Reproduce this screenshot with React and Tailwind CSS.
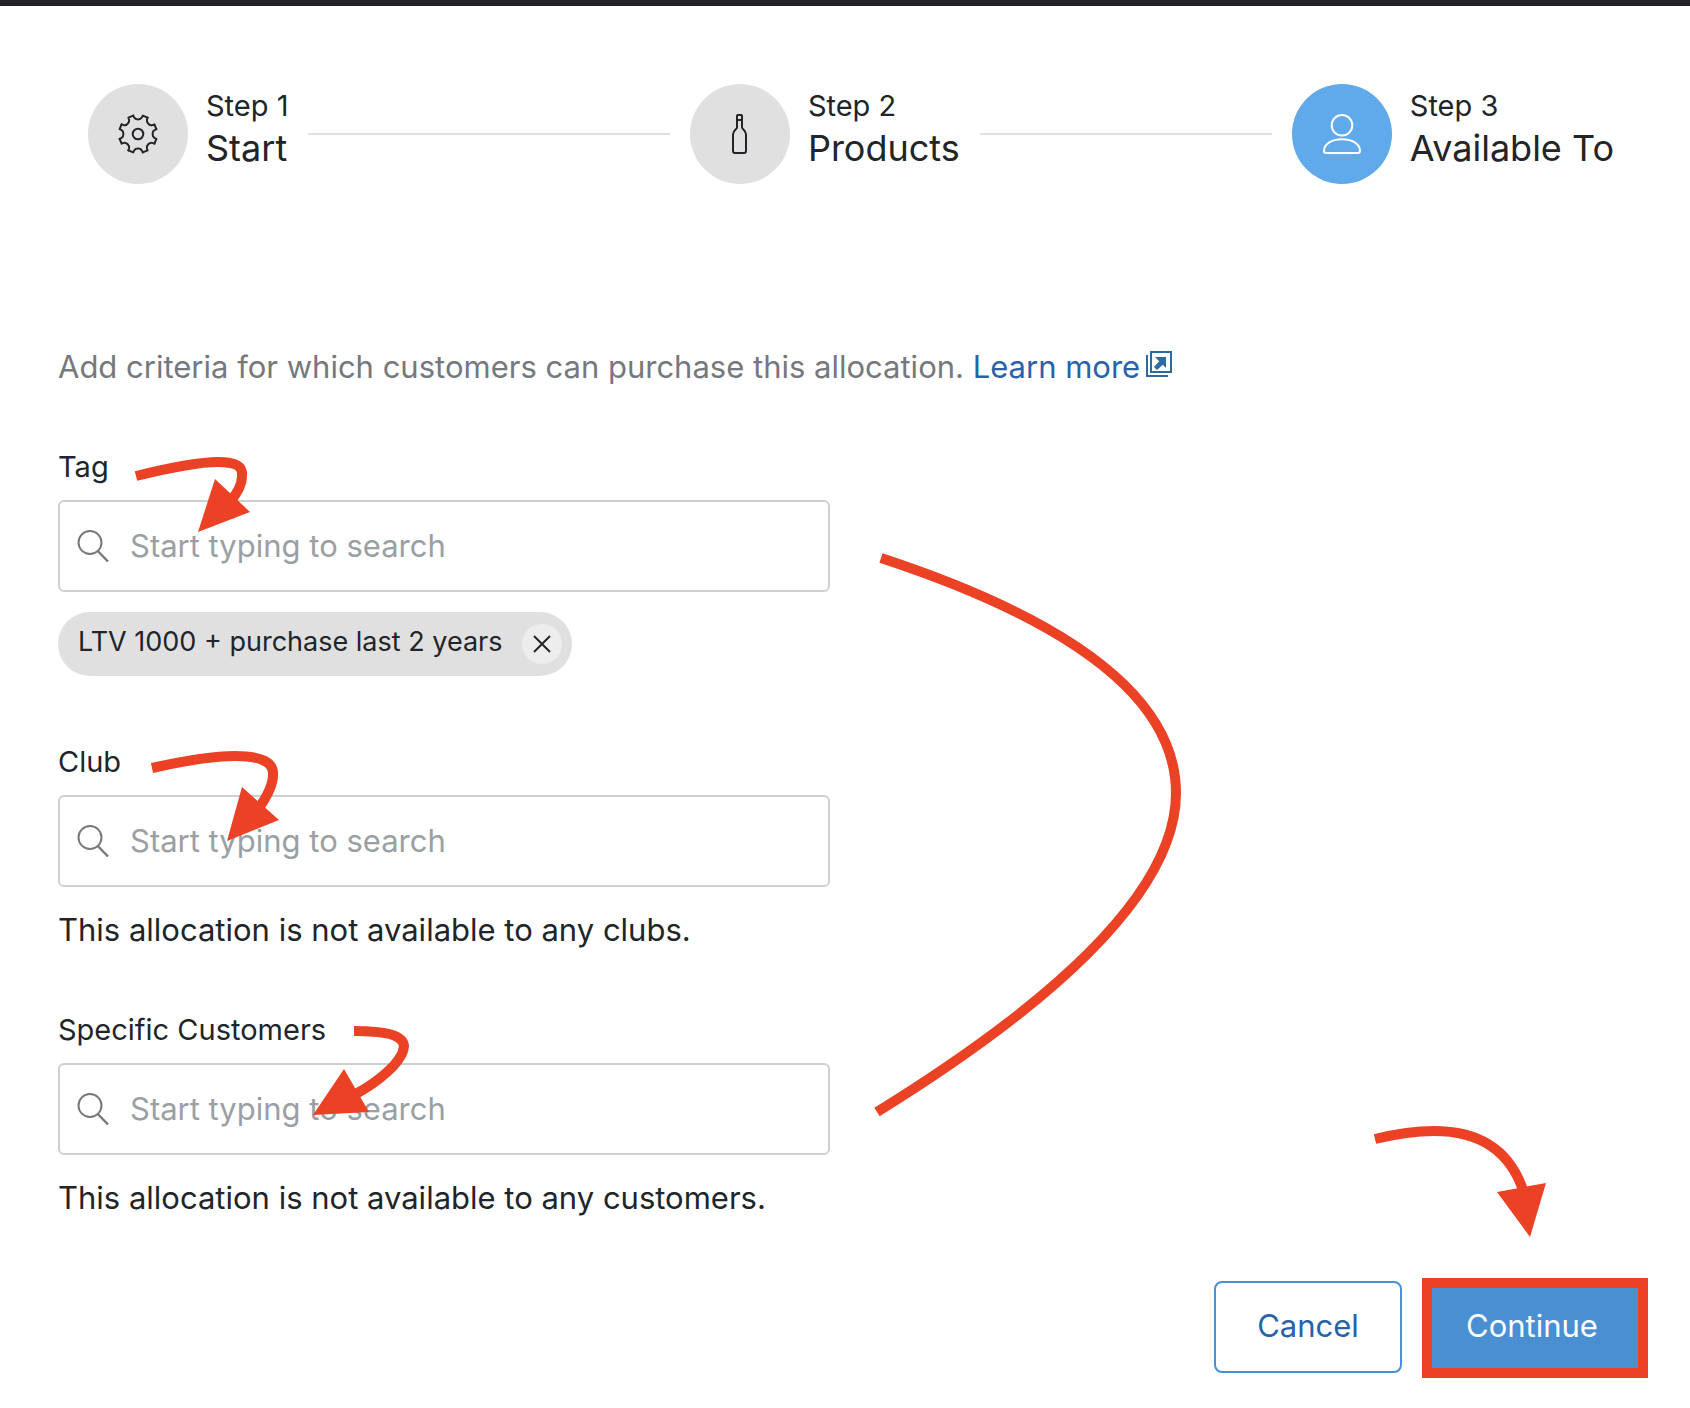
const RED = '#eb4125';
const GEAR_TURNS = [0, 45, 90, 135, 180, 225, 270, 315];

function GearIcon() {
  return (
    <svg className="size-10" viewBox="0 0 40 40" fill="none" stroke="currentColor" strokeWidth="2" strokeLinejoin="round" strokeLinecap="round" aria-hidden="true">
      <circle cx="20" cy="20" r="5.3" />
      {GEAR_TURNS.map((turn) => (
        <path key={turn} transform={`rotate(${turn} 20 20)`} d="M15.2 1.6 L16.2 3.6 Q17.2 5.4 20 5.4 Q22.8 5.4 23.8 3.6 L24.8 1.6 L29.6 3.6" />
      ))}
    </svg>
  );
}

function BottleIcon() {
  return (
    <svg className="size-10" viewBox="0 0 40 40" fill="none" stroke="currentColor" strokeWidth="2" strokeLinejoin="round" aria-hidden="true">
      <path d="M17.7 1 H21.3 Q22 1 22 2 V13.5 C22 15.5 26 16 26 20.5 V37 Q26 39 24 39 H15 Q13 39 13 37 V20.5 C13 16 17 15.5 17 13.5 V2 Q17 1 17.7 1 Z M17 6 H22" />
    </svg>
  );
}

function PersonIcon() {
  return (
    <svg className="size-10" viewBox="0 0 40 40" fill="none" stroke="currentColor" strokeWidth="2" strokeLinejoin="round" aria-hidden="true">
      <circle cx="20" cy="11.3" r="10.3" />
      <path d="M20 25.2 C31 25.2 38 30.5 38 37 Q38 39 36 39 H4 Q2 39 2 37 C2 30.5 9 25.2 20 25.2 Z" />
    </svg>
  );
}

function SearchIcon() {
  return (
    <svg className="size-8 shrink-0 text-[#75787d]" viewBox="0 0 32 32" fill="none" stroke="currentColor" strokeWidth="2" aria-hidden="true">
      <circle cx="13" cy="12.5" r="11.5" />
      <path d="M20.8 21 L31 31.5" strokeWidth="2.4" />
    </svg>
  );
}

function ExternalIcon() {
  return (
    <svg className="mb-1.5 size-[26px] text-[#2d6a9f]" viewBox="0 0 26 26" fill="none" stroke="currentColor" aria-hidden="true">
      <rect x="5" y="1" width="20" height="20" strokeWidth="2" />
      <path d="M1 4 V25 H22" strokeWidth="2" />
      <path d="M9 6 H20 V17 L16.8 13.8 L11 19 L8 16 L13.2 10.2 Z" fill="currentColor" stroke="none" />
    </svg>
  );
}

function Arrow({ d, head }) {
  return (
    <svg className="pointer-events-none absolute top-0 left-0 size-px overflow-visible" fill="none" aria-hidden="true">
      <path d={d} stroke={RED} strokeWidth="10" />
      {head && <path d={head} fill={RED} />}
    </svg>
  );
}

function Step({ number, title, icon, active, last }) {
  return (
    <li className="flex items-center gap-5">
      <div className="flex items-center gap-[18px]">
        <span className={active
          ? 'flex size-[100px] shrink-0 items-center justify-center rounded-full bg-[#60a9ea] text-white'
          : 'flex size-[100px] shrink-0 items-center justify-center rounded-full bg-[#e0e0e0]'}>
          {icon}
        </span>
        <div className="pb-3 whitespace-nowrap">
          <p className="text-[29px] leading-10">Step {number}</p>
          <p className="text-[36px] leading-11">{title}</p>
        </div>
      </div>
      {!last && <span className="h-0.5 flex-1 bg-[#e0e0e0]" />}
    </li>
  );
}

function SearchField({ id, label, arrow, children }) {
  return (
    <div>
      <label htmlFor={id} className="block text-[29px] leading-10">{label}</label>
      <div className="relative mt-[13px]">
        <div className="flex h-[92px] items-center gap-[21px] rounded-md border-2 border-[#cfcfcf] px-[17px]">
          <SearchIcon />
          <input id={id} type="text" placeholder="Start typing to search" className="min-w-0 flex-1 bg-transparent text-[31px] outline-none placeholder:text-[#9a9fa4]" />
        </div>
        <Arrow {...arrow} />
      </div>
      {children}
    </div>
  );
}

export default function App() {
  return (
    <main className="min-h-screen border-t-[6px] border-[#212529] bg-white pb-[35px] font-['Inter',sans-serif] text-[#212529]">
      <ol className="grid grid-cols-[1fr_1fr_auto] gap-x-5 pt-[78px] pr-[76px] pl-[88px]">
        <Step number={1} title="Start" icon={<GearIcon />} />
        <Step number={2} title="Products" icon={<BottleIcon />} />
        <Step number={3} title="Available To" icon={<PersonIcon />} active last />
      </ol>

      <form className="pt-[159px] pr-12 pl-[58px]" onSubmit={(e) => e.preventDefault()}>
        <p className="text-[31px] leading-12 text-[#75787d]">
          Add criteria for which customers can purchase this allocation.{' '}
          <a href="#learn" className="inline-flex items-center gap-1.5 text-[#2962a8]">
            Learn more <ExternalIcon />
          </a>
        </p>

        <div className="relative mt-14 w-[calc(50%-20px)]">
          <SearchField id="tag" label="Tag" arrow={{ d: 'M78 -24 Q135 -38 160 -38 C178 -38 185 -34 184 -24 C184 -15 180 -9 173 1', head: 'M140 32 L157 -21 L192 12 Z' }}>
            <div className="mt-5 flex h-16 w-fit items-center gap-5 rounded-full bg-[#e0e0e0] pr-2.5 pl-5">
              <span className="pb-1 text-[27px]">LTV 1000 + purchase last 2 years</span>
              <button type="button" aria-label="Remove tag" className="flex size-10 items-center justify-center rounded-full bg-[#ededed]">
                <svg className="size-[18px]" viewBox="0 0 18 18" stroke="currentColor" strokeWidth="2" aria-hidden="true">
                  <path d="M1 1 L17 17 M17 1 L1 17" />
                </svg>
              </button>
            </div>
          </SearchField>
          <div className="mt-[66px]">
            <SearchField id="club" label="Club" arrow={{ d: 'M94 -27 Q148 -39 177 -39 C205 -39 216 -32 215 -20 C215 -10 210 0 201 13', head: 'M169 46 L184 -8 L221 25 Z' }}>
              <p className="mt-[19px] text-[31px] leading-12">This allocation is not available to any clubs.</p>
            </SearchField>
          </div>
          <div className="mt-14">
            <SearchField id="customers" label="Specific Customers" arrow={{ d: 'M296 -32 C327 -32 345 -28 346 -17 C345 -1 320 19 296 32', head: 'M255 52 L286 6 L311 49 Z' }}>
              <p className="mt-[19px] text-[31px] leading-12">This allocation is not available to any customers.</p>
            </SearchField>
          </div>
          <Arrow d="M823 111 Q1118 208 1118 346 Q1118 480 819 665" />
        </div>

        <div className="mt-[59px] flex justify-end gap-5">
          <button type="button" className="h-[92px] w-[188px] rounded-lg border-2 border-[#4a8fd2] pb-0.5 text-[31px] text-[#2962a8]">Cancel</button>
          <div className="relative">
            <button type="submit" className="h-[92px] w-[220px] rounded-lg bg-[#4a8fd2] pb-0.5 text-[31px] text-white">Continue</button>
            <span className="pointer-events-none absolute -top-[3px] -right-1.5 -bottom-[5px] left-0 border-10 border-[#eb4125]" />
            <Arrow d="M-47 -142 Q-14 -150 12 -150 C60 -150 88 -129 101 -91" head="M108 -44 L75 -89 L124 -98 Z" />
          </div>
        </div>
      </form>
    </main>
  );
}
